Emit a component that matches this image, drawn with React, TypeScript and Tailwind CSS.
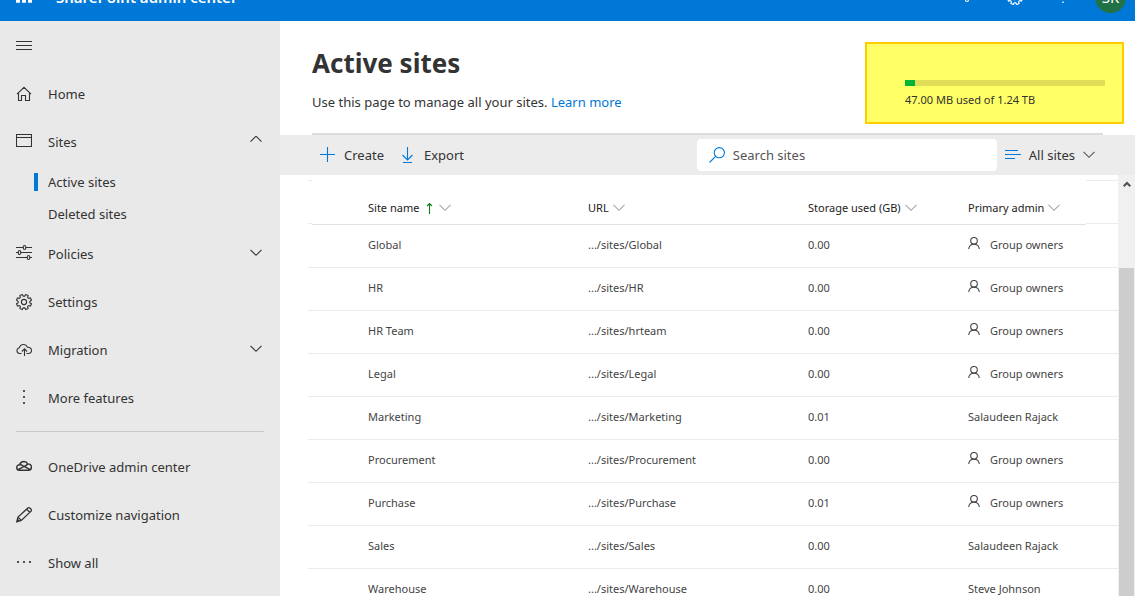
import { useState } from 'react'
import type { ReactNode } from 'react'

type IconProps = { className?: string; children: ReactNode; box?: number }

function Icon({ className = 'w-4 h-4', children, box = 16 }: IconProps) {
  return (
    <svg
      viewBox={`0 0 ${box} ${box}`}
      className={`shrink-0 ${className}`}
      fill="none"
      stroke="currentColor"
      strokeWidth="1.1"
      aria-hidden="true"
    >
      {children}
    </svg>
  )
}

// eight teeth, none of them pointing straight up
const gear = Array.from({ length: 8 }, (_, i) => {
  const point = (radius: number, degrees: number) => {
    const angle = ((i * 45 + 22.5 + degrees) * Math.PI) / 180
    return `${(8 + radius * Math.sin(angle)).toFixed(2)},${(8 - radius * Math.cos(angle)).toFixed(2)}`
  }
  return [point(5.9, -15), point(7.7, -10), point(7.7, 10), point(5.9, 15)].join(' ')
}).join(' ')

const icons: Record<string, ReactNode> = {
  home: <path d="M1 8.2 8 1.3l7 6.9M2.5 6.8v7.7h3v-5h4v5h4V6.8" />,
  sites: <path d="M.5.5h15v12H.5zM.5 3.5h15" />,
  policies: (
    <>
      <path d="M0 1.5h7M10 1.500h6M0 6.500h2M5 6.500h11M0 11.500h11M14 11.500h2" />
      <rect x="7.3" y="-.5" width="2.4" height="4" rx="1.2" />
      <rect x="2.3" y="4.5" width="2.4" height="4" rx="1.2" />
      <rect x="11.3" y="9.5" width="2.4" height="4" rx="1.2" />
    </>
  ),
  settings: (
    <>
      <polygon points={gear} strokeLinejoin="round" />
      <circle cx="8" cy="8" r="2.6" />
    </>
  ),
  migration: (
    <path d="M5.5 11.500H3.400A2.900 2.900 0 0 1 3.300 5.800C3.900 3.800 5.500 2.500 7.400 2.500c1.900 0 3.300 1.100 4 2.700 2.400-.2 4.100 1.200 4.100 3.100 0 1.800-1.400 3.200-3.200 3.200h-1.800M8.500 14V7M5.900 9.500l2.600-2.600 2.600 2.600" />
  ),
  more: (
    <g fill="currentColor" stroke="none" opacity=".85">
      <path d="M7 0h2v2H7zM7 6h2v2H7zM7 12h2v2H7z" />
    </g>
  ),
  onedrive: (
    <path
      strokeWidth="1.4"
      d="M3.5 11.300A2.800 2.800 0 0 1 3.600 5.700C4.200 3.800 5.900 2.500 7.900 2.500c1.700 0 3.100.9 3.800 2.400 2.200.1 3.700 1.500 3.700 3.300s-1.200 3.100-2.900 3.100zM3.400 5.800c1.500-.2 2.600.2 3.700 1l7.200 3.800M2 10.600l7.700-3.900c1-.7 1.600-1.400 2.300-1.700"
    />
  ),
  edit: (
    <path
      strokeWidth="1.3"
      d="M.8 14.700 2 10.100 11.900.9c1.400-1 4.200 1.600 3.200 3.200L5.300 13.400zM2 10.100l3.300 3.300M10.600 2.200l3.200 3.200M.8 14.700l2.400-.6-1.800-1.800z"
    />
  ),
  ellipsis: (
    <g fill="currentColor" stroke="none" opacity=".85">
      <path d="M1 6h2v2H1zM7 6h2v2H7zM13 6h2v2h-2z" />
    </g>
  ),
}

function Chevron({ up = false, className = '' }) {
  return (
    <svg viewBox="0 0 12 8" className={`h-2 w-3 shrink-0 ${className}`} fill="none" stroke="currentColor" strokeWidth="1.1" aria-hidden="true">
      <path d={up ? 'M.5 5.700 6 .2l5.500 5.500' : 'M.5.8 6 6.300 11.500.8'} />
    </svg>
  )
}

function NavItem({ icon, label, children }: { icon: string; label: string; children?: ReactNode }) {
  return (
    <a href="#" className="flex h-12 items-center gap-4 px-4">
      <Icon className="h-4 w-4 overflow-visible">{icons[icon]}</Icon>
      <span className="flex-1">{label}</span>
      {children}
    </a>
  )
}

function TopBar() {
  return (
    <header className="flex h-[21px] shrink-0 items-end overflow-hidden bg-[#0078d7] text-white">
      <div className="flex h-12 w-full shrink-0 items-center gap-6 pr-[9px] pl-4">
        <Icon>
          <path strokeWidth="3.4" strokeDasharray="4 2" d="M0 3h16M0 8h16M0 12h16" />
        </Icon>
        <span className="flex-1 text-[15px] font-semibold">SharePoint admin center</span>
        <div className="flex items-center gap-8">
          <Icon>
            <path d="M3 10.500V6a5 5 0 0 1 10 0v4.500zM6.500 10.500v.5a1.500 1.500 0 0 0 3 0v-.5" />
          </Icon>
          <Icon>
            <polygon points={gear} strokeLinejoin="round" />
            <circle cx="8" cy="8" r="2.6" />
          </Icon>
          <Icon>
            <path strokeWidth="1.4" d="M4.500 4.600C4.500 2.600 6 1 8 1s3.500 1.400 3.500 3.300C11.500 7 8 7 8 10M8 12.600v1.400" />
          </Icon>
          <span className="-ml-2 flex h-[31px] w-[31px] items-center justify-center rounded-full bg-[#217346] text-[15px]">SR</span>
        </div>
      </div>
    </header>
  )
}

function Sidebar() {
  const [open, setOpen] = useState(true)

  return (
    <nav className="w-[280px] shrink-0 bg-[#e9e9e9]">
      <button type="button" aria-label="Toggle navigation" className="flex h-[49px] items-center px-4">
        <Icon>
          <path strokeWidth="1" d="M0 3.500h16M0 7.500h16M0 11.500h16" />
        </Icon>
      </button>
      <NavItem icon="home" label="Home" />
      <button type="button" onClick={() => setOpen(!open)} className="flex h-12 w-full items-center gap-4 pr-[18px] pl-4 text-left">
        <Icon>{icons.sites}</Icon>
        <span className="flex-1">Sites</span>
        <Chevron up={open} className="mb-1" />
      </button>
      {open && (
        <div>
          <a href="#" className="flex h-8 items-center pl-[34px]">
            <span className="mr-[10px] h-[18px] w-1 bg-[#0078d7]" />
            Active sites
          </a>
          <a href="#" className="flex h-8 items-center pl-12">Deleted sites</a>
        </div>
      )}
      <NavItem icon="policies" label="Policies"><Chevron className="mr-[2px] mb-[2px]" /></NavItem>
      <NavItem icon="settings" label="Settings" />
      <NavItem icon="migration" label="Migration"><Chevron className="mr-[2px] mb-[2px]" /></NavItem>
      <NavItem icon="more" label="More features" />
      <hr className="mx-4 mt-[9px] mb-[11px] border-[#c8c8c8]" />
      <NavItem icon="onedrive" label="OneDrive admin center" />
      <NavItem icon="edit" label="Customize navigation" />
      <NavItem icon="ellipsis" label="Show all" />
    </nav>
  )
}

const sites = [
  { name: 'Global', url: '.../sites/Global', storage: '0.00', admin: 'Group owners' },
  { name: 'HR', url: '.../sites/HR', storage: '0.00', admin: 'Group owners' },
  { name: 'HR Team', url: '.../sites/hrteam', storage: '0.00', admin: 'Group owners' },
  { name: 'Legal', url: '.../sites/Legal', storage: '0.00', admin: 'Group owners' },
  { name: 'Marketing', url: '.../sites/Marketing', storage: '0.01', admin: 'Salaudeen Rajack' },
  { name: 'Procurement', url: '.../sites/Procurement', storage: '0.00', admin: 'Group owners' },
  { name: 'Purchase', url: '.../sites/Purchase', storage: '0.01', admin: 'Group owners' },
  { name: 'Sales', url: '.../sites/Sales', storage: '0.00', admin: 'Salaudeen Rajack' },
  { name: 'Warehouse', url: '.../sites/Warehouse', storage: '0.00', admin: 'Steve Johnson' },
]

function ColumnHead({ label, sorted = false }: { label: string; sorted?: boolean }) {
  return (
    <th className="border-b border-[#e1e1e1] pt-4 text-left font-normal text-[#222]">
      <button type="button" className="flex items-center gap-1 whitespace-nowrap">
        {label}
        {sorted && (
          <Icon className="h-3 w-3 text-[#107c10]" box={12}>
            <path d="M6.500 12V1.500M4 4l2.500-2.500L9 4" />
          </Icon>
        )}
        <Chevron className="text-[#a6a6a6]" />
      </button>
    </th>
  )
}

function SitesTable() {
  return (
    <div className="flex min-h-0 flex-1">
      <div className="min-w-0 flex-1 overflow-hidden pl-7">
        <table className="w-full table-fixed border-separate border-spacing-0 text-[11px] leading-4 text-[#444]">
          <colgroup>
            <col className="w-1" />
            <col className="w-14" />
            <col />
            <col />
            <col className="w-40" />
            <col className="w-[118px]" />
            <col className="w-8" />
          </colgroup>
          <thead>
            <tr className="h-[50px]">
              <td className="pt-[5px] align-top"><div className="h-11 border-y border-[#ebebeb]" /></td>
              <td className="border-b border-[#e1e1e1]" />
              <ColumnHead label="Site name" sorted />
              <ColumnHead label="URL" />
              <ColumnHead label="Storage used (GB)" />
              <ColumnHead label="Primary admin" />
              <td className="pt-[5px] align-top"><div className="h-11 border-y border-[#ebebeb]" /></td>
            </tr>
          </thead>
          <tbody>
            {sites.map(site => (
              <tr key={site.name} className="h-[43px] [&>td]:border-b [&>td]:border-[#ebebeb] [&>td]:pb-[3px]">
                <td colSpan={2} />
                <td>{site.name}</td>
                <td>{site.url}</td>
                <td>{site.storage}</td>
                <td colSpan={2}>
                  <span className="flex items-center gap-[10px]">
                    {site.admin === 'Group owners' && (
                      <Icon className="mb-[3px] h-3 w-3" box={12}>
                        <circle cx="6" cy="3.8" r="3.3" />
                        <path d="M.7 12C1 9.400 3 7.300 6 7.300s5 2.100 5.300 4.700" />
                      </Icon>
                    )}
                    {site.admin}
                  </span>
                </td>
              </tr>
            ))}
          </tbody>
        </table>
      </div>
      <div className="w-[17px] shrink-0 bg-[#f0f0f0] px-px">
        <div className="flex h-[93px] justify-center pt-[6px]">
          <svg viewBox="0 0 8 6" className="h-[6px] w-2" fill="none" stroke="#505050" strokeWidth="2" aria-hidden="true">
            <path d="M.7 5.300 4 2l3.300 3.300" />
          </svg>
        </div>
        <div className="h-full bg-[#cdcdcd]" />
      </div>
    </div>
  )
}

export default function App() {
  const [search, setSearch] = useState('')

  return (
    <div className="flex h-screen flex-col overflow-hidden bg-white font-['Noto_Sans',sans-serif] text-[13px] leading-5 text-[#333]">
      <TopBar />
      <div className="flex min-h-0 flex-1">
        <Sidebar />
        <main className="flex min-w-0 flex-1 flex-col">
          <div className="flex h-28 shrink-0 items-start justify-between pr-[11px] pl-8">
            <div className="pt-6">
              <h1 className="text-[26px] leading-9 font-bold">Active sites</h1>
              <p className="mt-[11px]">
                Use this page to manage all your sites. <a href="#" className="text-[#0078d7]">Learn more</a>
              </p>
            </div>
            <div className="mt-[21px] h-[82px] w-[259px] border-2 border-[#fc0] bg-[#ff6] px-[38px] pt-9">
              <div role="progressbar" aria-label="Storage used" aria-valuenow={5} className="h-[6px] w-[200px] bg-[#e0de58]">
                <div className="h-full w-[5%] bg-[#00b437]" />
              </div>
              <p className="mt-[6px] text-[11px] leading-4 whitespace-nowrap">47.00 MB used of 1.24 TB</p>
            </div>
          </div>
          <hr className="mr-8 ml-8 border-t-2 border-[#dcdcdc]" />
          <div className="flex h-10 shrink-0 items-center bg-[#ececec] pr-10 pl-10">
            <button type="button" className="flex items-center gap-2">
              <Icon className="h-4 w-4 text-[#0078d7]">
                <path d="M7.500 0v15M0 7.500h15" />
              </Icon>
              Create
            </button>
            <button type="button" className="ml-4 flex items-center gap-2">
              <Icon className="h-4 w-4 text-[#0078d7]">
                <path d="M7.500 0v13M2.500 8l5 5 5-5M3 15.500h9" />
              </Icon>
              Export
            </button>
            <label className="mr-2 ml-auto flex h-8 w-[300px] items-center gap-2 rounded-sm bg-white px-3">
              <Icon className="h-4 w-4 text-[#0078d7]">
                <circle cx="10.3" cy="5.7" r="5.1" />
                <path d="M6.600 9.400.5 15.500" />
              </Icon>
              <input
                type="search" value={search} onChange={e => setSearch(e.target.value)}
                placeholder="Search sites" aria-label="Search sites"
                className="min-w-0 flex-1 placeholder:text-[#555] focus:outline-none"
              />
            </label>
            <button type="button" className="flex items-center gap-2">
              <Icon className="h-4 w-4 text-[#0078d7]">
                <path d="M0 3.500h13M0 7.500h16M0 11.500h10" />
              </Icon>
              All sites
              <Chevron className="text-[#555]" />
            </button>
          </div>
          <SitesTable />
        </main>
      </div>
    </div>
  )
}
